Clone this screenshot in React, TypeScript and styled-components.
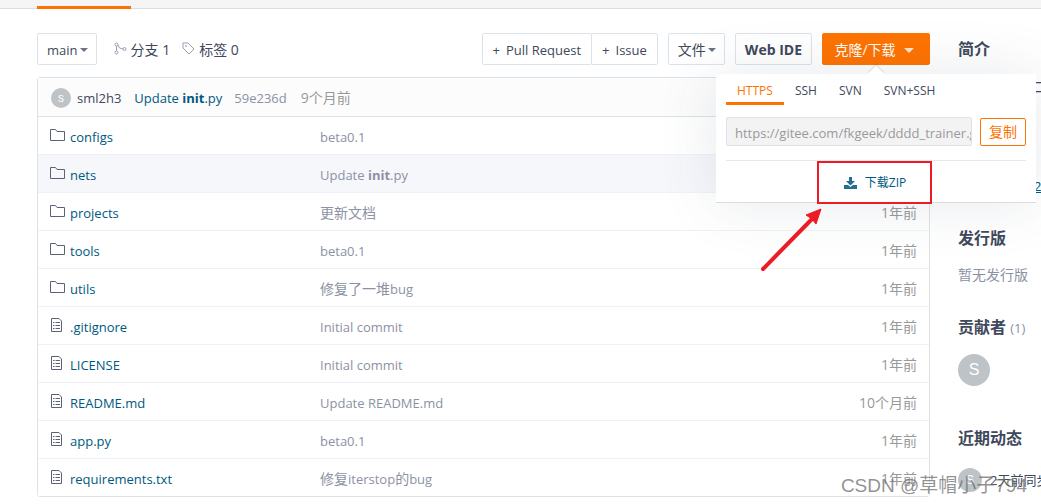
import React from 'react';
import styled, { createGlobalStyle, css } from 'styled-components';

const latin = '"Open Sans", "Noto Sans CJK SC", sans-serif';
const ink = '#40485b';
const muted = '#8c92a4';
const link = '#005980';
const orange = '#fe7300';
const line = '#dce3e8';
const red = '#ed1c24';

const GlobalStyle = createGlobalStyle`
  *, *::before, *::after { box-sizing: border-box; }
  body { margin: 0; background: #fff; color: ${ink}; font: 13px/20px ${latin}; overflow: hidden; }
  button, input { font: inherit; color: inherit; margin: 0; }
  a { color: ${link}; text-decoration: none; }
  h2 { margin: 0; }
`;

const Page = styled.div`
  position: relative;
`;

const TabStrip = styled.nav`
  height: 9px;
  padding: 6px 37px 0;
  background: #f5f5f5;
  border-bottom: 1px solid #dcddde;
`;

const ActiveTab = styled.div`
  width: 94px;
  height: 3px;
  background: ${orange};
`;

const Columns = styled.div`
  display: flex;
  gap: 28px;
  padding: 24px 0 0 37px;
`;

const Main = styled.main`
  flex: 1;
  min-width: 0;
`;

const Toolbar = styled.div`
  display: flex;
  align-items: center;
  height: 32px;
  margin-bottom: 12px;
`;

const Button = styled.button<{ $joined?: boolean; $menu?: boolean; $strong?: boolean }>`
  display: inline-flex;
  align-items: center;
  gap: ${p => (p.$menu ? 2 : 6)}px;
  height: 32px;
  padding: 2px ${p => (p.$menu ? 8 : 10)}px 0 ${p => (p.$menu ? 9 : 10)}px;
  white-space: nowrap;
  background: #fff;
  border: 1px solid ${line};
  border-radius: 2px;
  ${p => p.$strong && css`padding: 2px 9px 0; font-size: 14px; font-weight: 700;`}
  ${p => p.$joined && css`margin-left: -1px;`}
`;

const ButtonGroup = styled.div`
  display: flex;
`;

const Actions = styled.div`
  display: flex;
  gap: 10px;
  margin-left: auto;
`;

const Counts = styled.div`
  display: flex;
  gap: 12px;
  margin-left: 17px;
  padding-top: 1px;
`;

const CountLink = styled.a`
  display: flex;
  align-items: center;
  gap: 4px;
  font-size: 14px;
  color: ${ink};
`;

const Caret = styled.span`
  border: 4px solid transparent;
  border-top: 4px solid #6b7284;
  border-bottom: 0;
`;

const CloneCaret = styled.span`
  border: 5px solid transparent;
  border-top: 5px solid #ffe3cc;
  border-bottom: 0;
`;

const Cn = styled.span`
  font-size: 14px;
`;

const CloneWrap = styled.div`
  position: relative;
`;

const CloneButton = styled(Button)`
  width: 108px;
  padding-right: 14px;
  gap: 8px;
  justify-content: center;
  background: ${orange};
  border-color: ${orange};
  color: #fff;
  font-size: 14px;
`;

const Popup = styled.section`
  position: absolute;
  z-index: 2;
  top: 41px;
  right: -106px;
  width: 320px;
  height: 129px;
  padding: 0 10px;
  background: #fff;
  border-bottom: 1px solid #dcdcdc;
  box-shadow: 0 0 60px rgba(60, 70, 100, 0.12);

  &::before {
    content: '';
    position: absolute;
    top: -6px;
    left: 154px;
    width: 12px;
    height: 12px;
    background: #fff;
    transform: rotate(45deg);
    box-shadow: -1px -1px 1px rgba(0, 0, 0, 0.1);
  }
`;

const Protocols = styled.div`
  position: relative;
  display: flex;
  font-size: 12px;
`;

const Protocol = styled.button<{ $active?: boolean }>`
  height: 31px;
  padding: 6px 11px 0;
  background: none;
  border: 0;
  border-bottom: 3px solid ${p => (p.$active ? orange : 'transparent')};
  color: ${p => (p.$active ? orange : ink)};
`;

const CopyRow = styled.div`
  display: flex;
  align-items: flex-end;
  gap: 8px;
  padding: 12px 0 14px;
  border-bottom: 1px solid #e6e8eb;
`;

const UrlInput = styled.input`
  flex: 1;
  min-width: 0;
  height: 29px;
  padding: 2px 0 0 8px;
  background: #f3f3f4;
  border: 1px solid ${line};
  border-radius: 2px;
  color: #9a9a9a;
`;

const CopyButton = styled.button`
  width: 46px;
  height: 28px;
  padding: 0;
  background: #fff;
  border: 1px solid ${orange};
  border-radius: 2px;
  color: ${orange};
  font-size: 14px;
`;

const ZipLink = styled.a`
  display: flex;
  align-items: center;
  justify-content: center;
  gap: 8px;
  height: 44px;
  padding-right: 2px;
  font-size: 12px;
`;

const Highlight = styled.div`
  position: absolute;
  left: 101px;
  top: 87px;
  width: 115px;
  height: 43px;
  border: 2px solid ${red};
`;

const PointerArrow = styled.svg`
  position: absolute;
  left: 44px;
  top: 133px;
`;

const Panel = styled.section`
  border: 1px solid ${line};
  border-radius: 3px;
`;

const CommitBar = styled.div`
  display: flex;
  align-items: center;
  height: 39px;
  padding: 2px 13px 0;
  background: #fcfcfc;
  border-bottom: 1px solid ${line};
`;

const Avatar = styled.span<{ $size: number }>`
  display: inline-flex;
  flex: none;
  align-items: center;
  justify-content: center;
  width: ${p => p.$size}px;
  height: ${p => p.$size}px;
  border-radius: 50%;
  background: #bdc3c7;
  color: #fff;
  font-family: "Liberation Sans", sans-serif;
  font-size: ${p => (p.$size > 30 ? 16 : 12)}px;
`;

const Author = styled.a`
  margin: 0 13px 0 6px;
  color: ${ink};
`;

const Meta = styled.span`
  margin-left: 12px;
  color: ${muted};
`;

const CommitTime = styled(Meta)`
  margin-left: 14px;
  font-size: 14px;
  color: #999;
`;

const Files = styled.table`
  width: 100%;
  table-layout: fixed;
  border-collapse: separate;
  border-spacing: 0;
`;

const Cell = styled.td<{ $w?: number; $time?: boolean }>`
  height: 38px;
  padding: 2px 12px 0 0;
  border-bottom: 1px solid #eff2f5;
  ${p => p.$w && css`width: ${p.$w}px;`}
  color: ${muted};
  ${p => p.$time && css`color: #999; font-size: 14px; text-align: right;`}
`;

const FileRow = styled.tr<{ $hover?: boolean }>`
  background: ${p => (p.$hover ? '#f6f7fb' : '#fff')};
  &:last-child ${Cell} { height: 37px; border-bottom: 0; }
`;

const FileLink = styled.a`
  display: flex;
  align-items: center;
  gap: 5px;
  padding-left: 12px;
`;

const Icon = styled.svg`
  flex: none;
  display: block;
  fill: none;
  stroke: #5b6275;
`;

const EntryGlyph = styled(Icon)<{ $lift: number }>`
  margin-bottom: ${p => p.$lift}px;
`;

const SmallIcon = styled(Icon)`
  margin-bottom: 2px;
  stroke: #9aa0b0;
`;

const Sidebar = styled.aside`
  width: 83px;
  flex: none;
  overflow: hidden;
  white-space: nowrap;
`;

const Block = styled.section<{ $h: number }>`
  height: ${p => p.$h}px;
`;

const Title = styled.h2`
  font-size: 16px;
  line-height: 32px;
`;

const Intro = styled.div`
  display: flex;
  flex-direction: column;
  align-items: flex-start;
  justify-content: space-between;
  height: 119px;
  margin-top: 12px;
  padding-left: 76px;
  font-size: 14px;
`;

const UnderlinedLink = styled.a`
  font-size: 13px;
  text-decoration: underline;
`;

const Count = styled.span`
  color: ${muted};
  font-size: 13px;
  font-weight: 400;
`;

const Note = styled.p`
  margin: 11px 0 0;
  color: ${muted};
  font-size: 14px;
`;

const Contributor = styled.div`
  padding-top: 10px;
`;

const Activity = styled.div`
  display: flex;
  align-items: center;
  gap: 8px;
  padding-top: 14px;
`;

const Watermark = styled.div`
  position: absolute;
  z-index: 3;
  right: 14px;
  bottom: 4px;
  font: 19px/24px "Liberation Sans", "Noto Sans CJK SC", sans-serif;
  color: rgba(110, 110, 110, 0.75);
  white-space: nowrap;
`;

type Entry = { name: string; msg: React.ReactNode; time: string; dir?: boolean; hover?: boolean };

const entries: Entry[] = [
  { name: 'configs', msg: 'beta0.1', time: '1年前', dir: true },
  { name: 'nets', msg: <>Update <b>init</b>.py</>, time: '1年前', dir: true, hover: true },
  { name: 'projects', msg: <Cn>更新文档</Cn>, time: '1年前', dir: true },
  { name: 'tools', msg: 'beta0.1', time: '1年前', dir: true },
  { name: 'utils', msg: <><Cn>修复了一堆</Cn>bug</>, time: '1年前', dir: true },
  { name: '.gitignore', msg: 'Initial commit', time: '1年前' },
  { name: 'LICENSE', msg: 'Initial commit', time: '1年前' },
  { name: 'README.md', msg: 'Update README.md', time: '10个月前' },
  { name: 'app.py', msg: 'beta0.1', time: '1年前' },
  { name: 'requirements.txt', msg: <><Cn>修复</Cn>iterstop<Cn>的</Cn>bug</>, time: '1年前' },
];

const EntryIcon = ({ dir }: { dir?: boolean }) =>
  dir ? (
    <EntryGlyph $lift={3} width="15" height="13" viewBox="0 0 15 13">
      <path d="M.5 11.500V.5H5.500L7 2.500H14.500V11.500Z" />
    </EntryGlyph>
  ) : (
    <EntryGlyph $lift={2} width="15" height="15" viewBox="0 0 15 15">
      <path d="M1.500.5H9L11.500 3V13.500H1.500Z" />
      <path d="M3 4.500H4.500M5.500 4.500H10M3 7.500H4.500M5.500 7.500H10M3 10.500H4.500M5.500 10.500H10" />
    </EntryGlyph>
  );

export default function App() {
  return (
    <Page>
      <GlobalStyle />
      <TabStrip><ActiveTab /></TabStrip>
      <Columns>
        <Main>
          <Toolbar>
            <Button $menu>main <Caret /></Button>
            <Counts>
              <CountLink href="#branches">
                <SmallIcon width="13" height="13" viewBox="0 0 13 13">
                  <circle cx="2.500" cy="2.500" r="1.500" />
                  <circle cx="2.500" cy="10.500" r="1.500" />
                  <circle cx="10.500" cy="7" r="1.500" />
                  <path d="M2.500 4V9M4 3L5.500 6L9 7" />
                </SmallIcon>
                分支 1
              </CountLink>
              <CountLink href="#tags">
                <SmallIcon width="13" height="13" viewBox="0 0 13 13">
                  <path d="M1 1H6L12 7L7 12L1 6Z" />
                  <circle cx="4" cy="4" r=".5" />
                </SmallIcon>
                标签 0
              </CountLink>
            </Counts>
            <Actions>
              <ButtonGroup>
                <Button><span>+</span> <span>Pull Request</span></Button>
                <Button $joined><span>+</span> <span>Issue</span></Button>
              </ButtonGroup>
              <Button $menu><Cn>文件</Cn> <Caret /></Button>
              <Button $strong>Web IDE</Button>
              <CloneWrap>
                <CloneButton>克隆/下载 <CloneCaret /></CloneButton>
                <Popup>
                  <Protocols>
                    <Protocol $active>HTTPS</Protocol>
                    <Protocol>SSH</Protocol>
                    <Protocol>SVN</Protocol>
                    <Protocol>SVN+SSH</Protocol>
                  </Protocols>
                  <CopyRow>
                    <UrlInput aria-label="HTTPS" readOnly value="https://gitee.com/fkgeek/dddd_trainer.git" />
                    <CopyButton>复制</CopyButton>
                  </CopyRow>
                  <ZipLink href="#zip">
                    <svg width="13" height="12" viewBox="0 0 13 12" fill="#256d91">
                      <path d="M5 0H8V4H11L6.500 8.500L2 4H5ZM0 8H4L6.500 10L9 8H13V12H0Z" />
                    </svg>
                    下载ZIP
                  </ZipLink>
                  <Highlight />
                  <PointerArrow width="64" height="66" viewBox="0 0 64 66">
                    <path d="M3 62L52 12" stroke={red} strokeWidth="4" strokeLinecap="round" />
                    <path d="M61 2L56 17L52 12L46 8Z" fill={red} stroke={red} />
                  </PointerArrow>
                </Popup>
              </CloneWrap>
            </Actions>
          </Toolbar>
          <Panel>
            <CommitBar>
              <Avatar $size={20}>s</Avatar>
              <Author href="#author">sml2h3</Author>
              <a href="#commit">Update <b>init</b>.py</a>
              <Meta>59e236d</Meta>
              <CommitTime>9个月前</CommitTime>
            </CommitBar>
            <Files>
              <tbody>
                {entries.map(e => (
                  <FileRow key={e.name} $hover={e.hover}>
                    <Cell $w={282}>
                      <FileLink href="#file"><EntryIcon dir={e.dir} />{e.name}</FileLink>
                    </Cell>
                    <Cell>{e.msg}</Cell>
                    <Cell $w={120} $time>{e.time}</Cell>
                  </FileRow>
                ))}
              </tbody>
            </Files>
          </Panel>
        </Main>
        <Sidebar>
          <Block $h={189}>
            <Title>简介</Title>
            <Intro>
              <span>二</span>
              <UnderlinedLink href="#more">2</UnderlinedLink>
            </Intro>
          </Block>
          <Block $h={89}>
            <Title>发行版</Title>
            <Note>暂无发行版</Note>
          </Block>
          <Block $h={111}>
            <Title>贡献者 <Count>(1)</Count></Title>
            <Contributor><Avatar $size={32}>S</Avatar></Contributor>
          </Block>
          <Block $h={80}>
            <Title>近期动态</Title>
            <Activity><Avatar $size={24}>S</Avatar><span>2天前同步</span></Activity>
          </Block>
        </Sidebar>
      </Columns>
      <Watermark>CSDN @草帽小子794</Watermark>
    </Page>
  );
}
